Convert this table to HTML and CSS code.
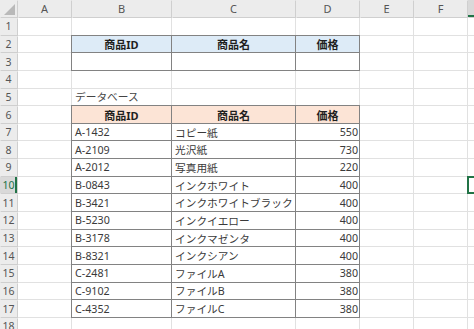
FILE: index.html
```html
<!DOCTYPE html>
<html lang="ja">

<head>
    <meta charset="UTF-8">
    <meta name="viewport" content="width=device-width, initial-scale=1.0">
    <title>商品データベース</title>
    <link rel="stylesheet" href="styles.css">
</head>

<body>
    <div class="sheet" id="sheet"></div>

    <script>
        const sheet = document.getElementById("sheet");
        const columns = ["A", "B", "C", "D", "E", "F", "G"];
        const heading = ["商品ID", "商品名", "価格"];
        const products = [
            ["A-1432", "コピー紙", 550],
            ["A-2109", "光沢紙", 730],
            ["A-2012", "写真用紙", 220],
            ["B-0843", "インクホワイト", 400],
            ["B-3421", "インクホワイトブラック", 400],
            ["B-5230", "インクイエロー", 400],
            ["B-3178", "インクマゼンタ", 400],
            ["B-8321", "インクシアン", 400],
            ["C-2481", "ファイルA", 380],
            ["C-9102", "ファイルB", 380],
            ["C-4352", "ファイルC", 380]
        ];
        const activeRow = 10;
        const activeCol = "G";

        function addCell(text, className) {
            const cell = document.createElement("div");
            cell.className = className;
            cell.textContent = text;
            sheet.appendChild(cell);
        }

        // header row (the last column is only a sliver, so no letter)
        addCell("", "corner");
        columns.forEach(col => {
            const label = col === "G" ? "" : col;
            addCell(label, col === activeCol ? "col-head sel" : "col-head");
        });

        for (let row = 1; row <= 18; row++) {
            addCell(row, row === activeRow ? "row-head sel" : "row-head");

            columns.forEach((col, i) => {
                const k = i - 1; // 0..2 for columns B..D
                const inRange = k >= 0 && k < 3;
                let text = "";
                let cls = "cell";

                if (row === 2 && inRange) {
                    text = heading[k];
                    cls += " boxed th search";
                } else if (row === 3 && inRange) {
                    cls += " boxed";
                } else if (row === 5 && col === "B") {
                    text = "データベース";
                    cls += " note";
                } else if (row === 6 && inRange) {
                    text = heading[k];
                    cls += " boxed th db";
                } else if (row >= 7 && row < 7 + products.length && inRange) {
                    text = products[row - 7][k];
                    cls += " boxed";
                    if (k === 2) cls += " num";
                }

                if (row === activeRow && col === activeCol) cls += " active";
                addCell(text, cls);
            });
        }
    </script>
</body>

</html>
```

FILE: styles.css
```css
body {
    margin: 0;
    background-color: #fff;
    font-family: "Noto Sans", "Noto Sans CJK JP", sans-serif;
    overflow: hidden;
}

.sheet {
    display: grid;
    grid-template-columns: 17px 53px 99px 123px 63px 53px 53px 40px;
    grid-template-rows: 17px;
    grid-auto-rows: 16.65px;
    gap: 1px;
    width: max-content;
    background-color: #e1e1e1;
}

.corner,
.col-head,
.row-head {
    display: flex;
    align-items: center;
    justify-content: center;
    background-color: #ececec;
    color: #555;
    font-size: 11px;
    box-shadow: 1px 1px 0 #cfcfcf;
}

.corner {
    position: relative;
}

.corner::after {
    content: "";
    position: absolute;
    right: 2px;
    bottom: 2px;
    width: 11px;
    height: 11px;
    background-color: #b9b9b9;
    clip-path: polygon(100% 0, 100% 100%, 0 100%);
}

.row-head {
    font-size: 10.5px;
}

.col-head.sel {
    background-color: #d9d9d9;
    box-shadow: inset 0 -2px 0 #217346, 1px 1px 0 #cfcfcf;
}

.row-head.sel {
    background-color: #d9d9d9;
    color: #217346;
    box-shadow: inset -2px 0 0 #217346, 1px 1px 0 #cfcfcf;
}

.cell {
    display: flex;
    align-items: center;
    padding: 0 3px;
    background-color: #fff;
    color: #3a3a3a;
    font-size: 10.7px;
    white-space: nowrap;
    overflow: hidden;
}

.boxed {
    outline: 1px solid #828282;
}

.th {
    justify-content: center;
    font-size: 11px;
    font-weight: bold;
    color: #1f1f1f;
}

.search {
    background-color: #ddebf7;
}

.db {
    background-color: #fce4d6;
}

.num {
    justify-content: flex-end;
    padding-right: 1px;
}

.note {
    color: #444;
    overflow: visible;
}

.active {
    box-shadow: inset 0 0 0 1px #217346;
    outline: 1px solid #217346;
}
```
